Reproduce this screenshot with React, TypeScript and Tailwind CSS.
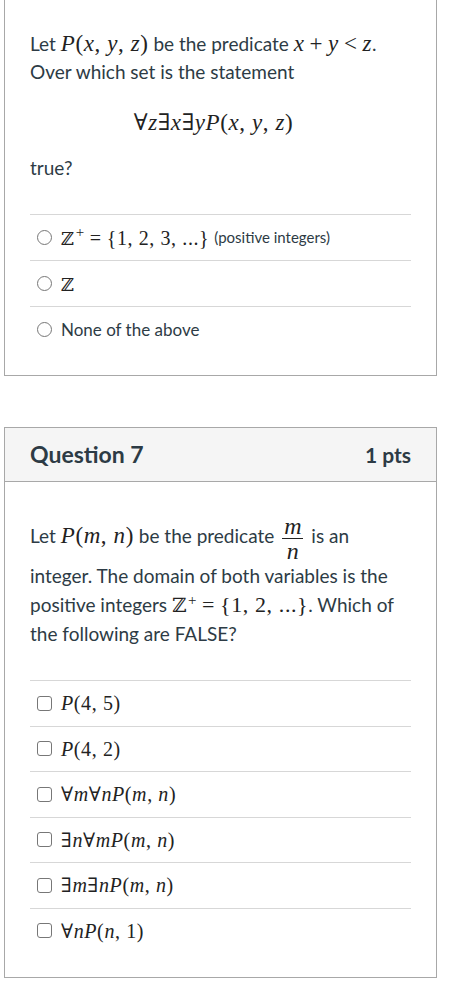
import React from "react";

const I = ({ children }: { children: React.ReactNode }) => (
  <span className="italic">{children}</span>
);

const Math = ({ children, size = "text-[22px]" }: { children: React.ReactNode; size?: string }) => (
  <span className={`font-['Liberation_Serif','DejaVu_Serif',serif] leading-none tracking-[0.6px] text-[#222] ${size}`}>
    {children}
  </span>
);

// operator with katex-like spacing
const Op = ({ children }: { children: React.ReactNode }) => (
  <span className="mx-[5px]">{children}</span>
);

const Z = () => (
  <span className="font-['DejaVu_Serif',serif] text-[0.9em] not-italic">ℤ</span>
);

const Sup = () => <sup className="text-[15px] ml-[1px]">+</sup>;

const Radio = () => (
  <span className="w-[15px] h-[15px] rounded-full border border-[#777] shrink-0" />
);

const Check = () => (
  <span className="w-[15px] h-[15px] rounded-[3px] border-[1.5px] border-[#777] shrink-0" />
);

const Row = ({ box, h = "h-[46px]", children }: { box: React.ReactNode; h?: string; children: React.ReactNode }) => (
  <div className={`${h} flex items-center gap-[9px] pl-[7px] border-t border-[#d7d7d7] text-[17px]`}>
    {box}
    <div className="flex items-center">{children}</div>
  </div>
);

export default function App() {
  const answers = [
    <>
      <I>P</I>(4, 5)
    </>,
    <>
      <I>P</I>(4, 2)
    </>,
    <>
      ∀<I>m</I>∀<I>n</I>
      <I>P</I>(<I>m</I>, <I>n</I>)
    </>,
    <>
      ∃<I>n</I>∀<I>m</I>
      <I>P</I>(<I>m</I>, <I>n</I>)
    </>,
    <>
      ∃<I>m</I>∃<I>n</I>
      <I>P</I>(<I>m</I>, <I>n</I>)
    </>,
    <>
      ∀<I>n</I>
      <I>P</I>(<I>n</I>, 1)
    </>,
  ];

  return (
    <div className="min-h-screen bg-white font-['Lato','Noto_Sans',sans-serif] text-[19px] text-[#2d3b45] pl-[4px]">
      {/* question 6, top cut off */}
      <div className="w-[433px] border-x border-b border-[#a8a8a8] px-[25px] pt-[30px] pb-[23px]">
        <p className="leading-[28px] whitespace-nowrap">
          Let{" "}
          <Math size="text-[23px]">
            <I>P</I>(<I>x</I>, <I>y</I>, <I>z</I>)
          </Math>{" "}
          be the predicate{" "}
          <Math size="text-[23px]">
            <I>x</I>
            <Op>+</Op>
            <I>y</I>
            <Op>&lt;</Op>
            <I>z</I>
          </Math>
          .
          <br />
          Over which set is the statement
        </p>
        <div className="mt-[22px] mb-[18px] h-[28px] flex items-center justify-center pr-[14px]">
          <Math size="text-[23px]">
            ∀<I>z</I>∃<I>x</I>∃<I>y</I>
            <I>P</I>(<I>x</I>, <I>y</I>, <I>z</I>)
          </Math>
        </div>
        <p className="leading-[28px]">true?</p>

        <div className="mt-[32px]">
          <Row box={<Radio />}>
            <Math size="text-[20px]">
              <Z />
              <Sup />
              <Op>=</Op>
              {"{"}1, 2, 3, ...{"}"}
            </Math>
            <span className="ml-[5px] text-[15px]">(positive integers)</span>
          </Row>
          <Row box={<Radio />}>
            <Math size="text-[20px]">
              <Z />
            </Math>
          </Row>
          <Row box={<Radio />}>
            <span>None of the above</span>
          </Row>
        </div>
      </div>

      {/* question 7 */}
      <div className="w-[433px] mt-[51px] border border-[#a8a8a8]">
        <div className="h-[54px] bg-[#f5f5f5] border-b border-[#a8a8a8] px-[25px] flex items-center justify-between">
          <h2 className="text-[23px] font-bold text-[#2d3b45]">Question 7</h2>
          <span className="text-[21px] font-bold text-[#2d3b45]">1 pts</span>
        </div>
        <div className="px-[25px] pt-[34px] pb-[24px]">
          <p className="leading-[29px] whitespace-nowrap">
            Let{" "}
            <Math size="text-[23px]">
              <I>P</I>(<I>m</I>, <I>n</I>)
            </Math>{" "}
            be the predicate{" "}
            <span className="inline-flex flex-col items-center align-middle mx-[3px] font-['Liberation_Serif',serif] italic text-[24px] leading-[20px] text-[#222]">
              <span className="px-[2px] pb-[2px]">m</span>
              <span className="w-full border-t border-[#222]" />
              <span className="px-[2px] pt-[2px]">n</span>
            </span>{" "}
            is an
            <br />
            integer. The domain of both variables is the
            <br />
            positive integers{" "}
            <Math size="text-[22px]">
              <Z />
              <Sup />
              <Op>=</Op>
              {"{"}1, 2, ...{"}"}
            </Math>
            . Which of
            <br />
            the following are FALSE?
          </p>

          <div className="mt-[32px]">
            {answers.map((a, i) => (
              <Row key={i} box={<Check />} h="h-[45.5px]">
                <Math size="text-[20px]">{a}</Math>
              </Row>
            ))}
          </div>
        </div>
      </div>
    </div>
  );
}
